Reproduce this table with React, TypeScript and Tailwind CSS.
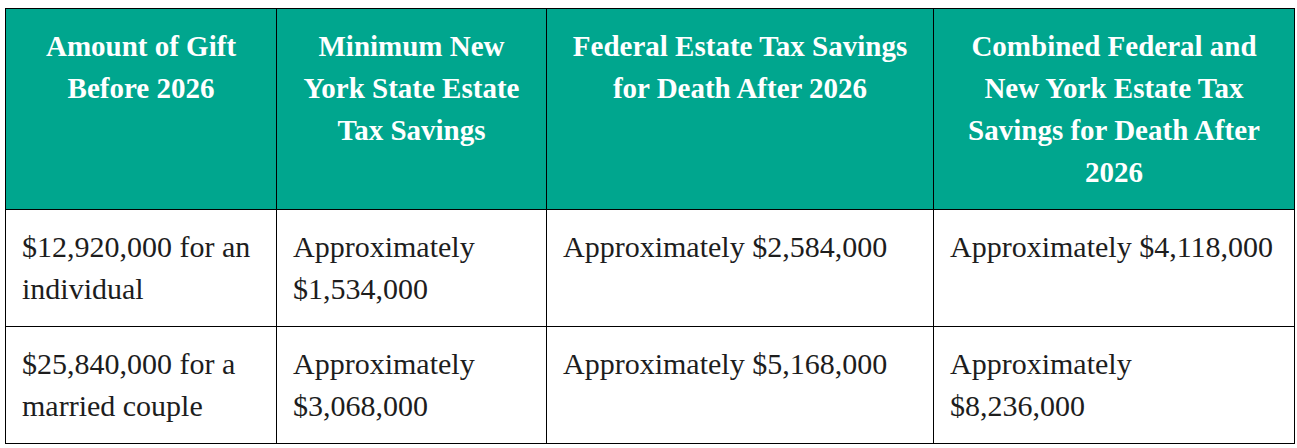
const header = [
  "Amount of Gift Before 2026",
  "Minimum New York State Estate Tax Savings",
  "Federal Estate Tax Savings for Death After 2026",
  "Combined Federal and New York Estate Tax Savings for Death After 2026",
];

const rows: React.ReactNode[][] = [
  [
    "$12,920,000 for an individual",
    "Approximately $1,534,000",
    "Approximately $2,584,000",
    "Approximately $4,118,000",
  ],
  [
    "$25,840,000 for a married couple",
    "Approximately $3,068,000",
    "Approximately $5,168,000",
    <>
      Approximately
      <br />
      $8,236,000
    </>,
  ],
];

export default function App() {
  return (
    <div className="min-h-screen bg-white pt-2 pl-[5px]">
      <table
        className="w-[1289px] table-fixed border-collapse font-['Liberation_Serif',serif]"
      >
        <colgroup>
          <col className="w-[271px]" />
          <col className="w-[270px]" />
          <col className="w-[387px]" />
          <col className="w-[361px]" />
        </colgroup>
        <thead>
          <tr className="bg-[#00a68e]">
            {header.map((h) => (
              <th
                key={h}
                className="border border-black px-4 py-4 align-top text-center text-[29px] font-bold leading-[42px] text-white"
              >
                {h}
              </th>
            ))}
          </tr>
        </thead>
        <tbody>
          {rows.map((row, i) => (
            <tr key={i}>
              {row.map((cell, j) => (
                <td
                  key={j}
                  className="border border-black px-4 py-4 align-top text-left text-[30px] leading-[42px] text-[#1d1d1d]"
                >
                  {cell}
                </td>
              ))}
            </tr>
          ))}
        </tbody>
      </table>
    </div>
  );
}
